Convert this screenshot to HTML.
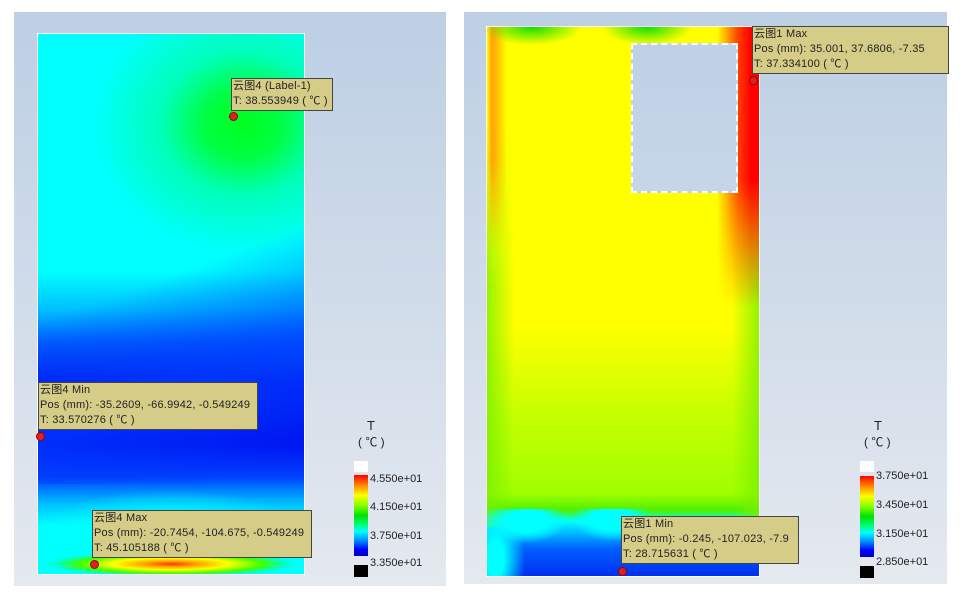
<!DOCTYPE html>
<html><head><meta charset="utf-8"><style>
body{margin:0;width:967px;height:593px;background:#fff;position:relative;overflow:hidden;font-family:"Liberation Sans","Noto Sans CJK SC",sans-serif;}
.panel{position:absolute;background:linear-gradient(#bccfe4,#e5e9ef);}
.plate{position:absolute;outline:1px solid #fff;overflow:hidden;}
.plate div{position:absolute;}
.lbl{position:absolute;background:#d5cc88;border:1px solid #444;font-size:11px;line-height:15px;color:#222;padding:0 1px;white-space:nowrap;overflow:hidden;letter-spacing:0.2px}
.dot{position:absolute;width:9px;height:9px;border-radius:50%;background:#e02020;border:1px solid #900;box-sizing:border-box;}
.leg{position:absolute;font-size:11px;color:#222;}
.bar{position:absolute;width:14px;}
</style></head><body>
<div class="panel" style="left:14px;top:12px;width:432px;height:574px"></div>
<div class="panel" style="left:464px;top:12px;width:483px;height:572px"></div>

<div class="plate" style="left:38px;top:34px;width:266px;height:540px;background:
linear-gradient(#00ffff 0%,#00ffff 44%,#00c0ff 51%,#0060ff 57%,#0020f0 64%,#0010f0 76%,#0040ff 82%,#00c0ff 87%,#00ffff 91%)">
 <div style="left:-60px;top:-60px;width:400px;height:330px;background:radial-gradient(ellipse 150px 130px at 265px 150px,#00ff20 0%,#00ff40 25%,rgba(0,255,140,0.6) 55%,rgba(0,255,255,0) 100%)"></div>
 <div style="left:0;top:150px;width:266px;height:300px;background:linear-gradient(160deg,rgba(0,80,255,0) 35%,rgba(0,60,255,0.7) 65%,rgba(0,60,255,0) 95%)"></div>
 <div style="left:0;top:420px;width:266px;height:120px;background:radial-gradient(ellipse 170px 85px at 133px 120px,#00ffff 55%,rgba(0,255,255,0.5) 78%,rgba(0,255,255,0) 100%)"></div>
 <div style="left:5px;top:514px;width:256px;height:26px;background:radial-gradient(ellipse 128px 13px at 128px 16px,#ff3000 0%,#ffa000 20%,#ffff00 45%,#40ff00 72%,rgba(0,255,160,0.5) 90%,rgba(0,255,255,0) 100%)"></div>
</div>

<div class="plate" style="left:487px;top:27px;width:272px;height:549px;background:
linear-gradient(#ffff00 0%,#ffff00 55%,#c8ff00 70%,#a0ff00 85%,#50f000 88%,#00ffff 90%,#0060ff 95%,#0030f0 100%)">
 <div style="left:0;top:100px;width:272px;height:400px;background:linear-gradient(90deg,rgba(120,240,0,0.8),rgba(255,255,0,0) 10%,rgba(255,255,0,0) 90%,rgba(120,240,0,0.8));-webkit-mask:linear-gradient(transparent,#000 40%)"></div>
 <div style="left:0;top:0;width:20px;height:220px;background:linear-gradient(90deg,rgba(255,150,0,0) 0%,#ffa000 25%,rgba(255,200,0,0) 100%);-webkit-mask:linear-gradient(#000 60%,transparent)"></div>
 <div style="left:230px;top:0;width:42px;height:280px;background:linear-gradient(90deg,rgba(255,60,0,0) 0%,#ff4000 50%,#ff0000 80%);-webkit-mask:linear-gradient(#000 55%,transparent)"></div>
 <div style="left:0;top:0;width:272px;height:30px;background:radial-gradient(ellipse 50px 18px at 45px 0,#10e000,rgba(0,230,0,0)),radial-gradient(ellipse 45px 18px at 160px 0,#10e000,rgba(0,230,0,0))"></div>
 <div style="left:0;top:482px;width:272px;height:67px;background:radial-gradient(ellipse 40px 22px at 40px 12px,#00ffff 50%,rgba(0,255,255,0)),radial-gradient(ellipse 40px 22px at 125px 10px,#00ffff 50%,rgba(0,255,255,0)),radial-gradient(ellipse 30px 60px at 8px 50px,#00ffff 30%,rgba(0,255,255,0))"></div>
</div>
<div style="position:absolute;left:631px;top:43px;width:107px;height:150px;background:linear-gradient(#bfd1e6,#c6d6e8);border:2px dashed #fff;box-sizing:border-box"></div>

<div class="lbl" style="left:231px;top:78px;width:98px;height:31px">云图4 (Label-1)<br>T: 38.553949 ( ℃ )</div>
<div class="dot" style="left:229px;top:112px"></div>
<div class="lbl" style="left:38px;top:382px;width:216px;height:46px">云图4 Min<br>Pos (mm): -35.2609, -66.9942, -0.549249<br>T: 33.570276 ( ℃ )</div>
<div class="dot" style="left:36px;top:432px"></div>
<div class="lbl" style="left:92px;top:510px;width:216px;height:46px">云图4 Max<br>Pos (mm): -20.7454, -104.675, -0.549249<br>T: 45.105188 ( ℃ )</div>
<div class="dot" style="left:90px;top:560px"></div>

<div class="lbl" style="left:752px;top:26px;width:193px;height:46px">云图1 Max<br>Pos (mm): 35.001, 37.6806, -7.35<br>T: 37.334100 ( ℃ )</div>
<div class="dot" style="left:749px;top:76px"></div>
<div class="lbl" style="left:621px;top:516px;width:174px;height:46px">云图1 Min<br>Pos (mm): -0.245, -107.023, -7.9<br>T: 28.715631 ( ℃ )</div>
<div class="dot" style="left:618px;top:567px"></div>

<div class="leg" style="left:367px;top:418px;font-size:13px">T</div>
<div class="leg" style="left:358px;top:433px;font-size:12px">( ℃ )</div>
<div class="bar" style="left:354px;top:461px;height:11px;background:#fff"></div>
<div class="bar" style="left:354px;top:475px;height:81px;background:linear-gradient(#ff0000,#ff8000 12%,#ffff00 25%,#80ff00 38%,#00e000 50%,#00ff80 62%,#00ffff 70%,#0080ff 82%,#0000ff 92%,#0000c0)"></div>
<div class="bar" style="left:354px;top:565px;height:12px;background:#000"></div>
<div class="leg" style="left:370px;top:473px">4.550e+01</div>
<div class="leg" style="left:370px;top:501px">4.150e+01</div>
<div class="leg" style="left:370px;top:530px">3.750e+01</div>
<div class="leg" style="left:370px;top:557px">3.350e+01</div>

<div class="leg" style="left:874px;top:418px;font-size:13px">T</div>
<div class="leg" style="left:864px;top:433px;font-size:12px">( ℃ )</div>
<div class="bar" style="left:860px;top:461px;height:11px;background:#fff"></div>
<div class="bar" style="left:860px;top:476px;height:81px;background:linear-gradient(#ff0000,#ff8000 12%,#ffff00 25%,#80ff00 38%,#00e000 50%,#00ff80 62%,#00ffff 70%,#0080ff 82%,#0000ff 92%,#0000c0)"></div>
<div class="bar" style="left:860px;top:566px;height:12px;background:#000"></div>
<div class="leg" style="left:876px;top:470px">3.750e+01</div>
<div class="leg" style="left:876px;top:499px">3.450e+01</div>
<div class="leg" style="left:876px;top:528px">3.150e+01</div>
<div class="leg" style="left:876px;top:556px">2.850e+01</div>
</body></html>
